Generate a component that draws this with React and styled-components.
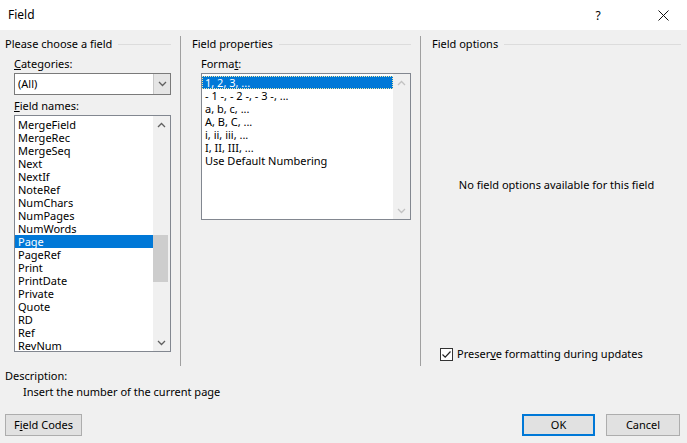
import React from 'react'
import styled, { createGlobalStyle } from 'styled-components'

const GlobalStyle = createGlobalStyle`
  html, body {
    margin: 0;
    padding: 0;
    background: #f0f0f0;
  }
  body {
    font-family: "Noto Sans", "DejaVu Sans", sans-serif;
    font-size: 11px;
    color: #000;
  }
  * { box-sizing: border-box; }
`

const fieldNames = [
  'MergeField', 'MergeRec', 'MergeSeq', 'Next', 'NextIf', 'NoteRef',
  'NumChars', 'NumPages', 'NumWords', 'Page', 'PageRef', 'Print',
  'PrintDate', 'Private', 'Quote', 'RD', 'Ref', 'RevNum'
]

const formats = [
  '1, 2, 3, ...', '- 1 -, - 2 -, - 3 -, ...', 'a, b, c, ...', 'A, B, C, ...',
  'i, ii, iii, ...', 'I, II, III, ...', 'Use Default Numbering'
]

const Chevron = ({ up, color = '#606060' }) => (
  <svg width="9" height="6" viewBox="0 0 9 6">
    <polyline
      points={up ? '1,5 4.5,1.5 8,5' : '1,1 4.5,4.5 8,1'}
      fill="none"
      stroke={color}
      strokeWidth="1.3"
    />
  </svg>
)

const App = () => {
  return (
    <Dialog>
      <GlobalStyle />
      <TitleBar>
        <span>Field</span>
        <TitleButtons>
          <TitleButton>?</TitleButton>
          <TitleButton>
            <svg width="11" height="11" viewBox="0 0 11 11">
              <path d="M0.5 0.5 L10.5 10.5 M10.5 0.5 L0.5 10.5" stroke="#111" strokeWidth="1" />
            </svg>
          </TitleButton>
        </TitleButtons>
      </TitleBar>

      <Body>
        <Columns>
          <Column width={181} padLeft={5} padRight={9} divider>
            <GroupHeading>
              <span>Please choose a field</span>
              <Rule />
            </GroupHeading>
            <Indent>
              <Label top={4}><u>C</u>ategories:</Label>
              <Combo>
                <ComboText>(All)</ComboText>
                <ComboButton><Chevron /></ComboButton>
              </Combo>
              <Label top={3}><u>F</u>ield names:</Label>
              <ListBox height={237}>
                <ListItems>
                  {fieldNames.map(n => (
                    <Item key={n} selected={n === 'Page'}>{n}</Item>
                  ))}
                </ListItems>
                <ScrollBar>
                  <Arrow><Chevron up /></Arrow>
                  <Track>
                    <Thumb style={{ top: 102, height: 47 }} />
                  </Track>
                  <Arrow><Chevron /></Arrow>
                </ScrollBar>
              </ListBox>
            </Indent>
          </Column>

          <Column width={240} padLeft={11} padRight={9} divider>
            <GroupHeading>
              <span>Field properties</span>
              <Rule />
            </GroupHeading>
            <Indent>
              <Label top={4}>Forma<u>t</u>:</Label>
              <ListBox height={147}>
                <ListItems>
                  {formats.map((f, i) => (
                    <Item key={f} selected={i === 0} focused={i === 0}>{f}</Item>
                  ))}
                </ListItems>
                <ScrollBar>
                  <Arrow><Chevron up color="#c2c2c2" /></Arrow>
                  <Track />
                  <Arrow><Chevron color="#c2c2c2" /></Arrow>
                </ScrollBar>
              </ListBox>
            </Indent>
          </Column>

          <Column grow padLeft={11} padRight={6}>
            <GroupHeading>
              <span>Field options</span>
              <Rule />
            </GroupHeading>
            <NoOptions>No field options available for this field</NoOptions>
            <CheckRow>
              <CheckBox>
                <svg width="11" height="11" viewBox="0 0 11 11">
                  <polyline points="1.5,5.5 4.2,8.2 9.5,2.5" fill="none" stroke="#222" strokeWidth="1.2" />
                </svg>
              </CheckBox>
              <span>Preser<u>v</u>e formatting during updates</span>
            </CheckRow>
          </Column>
        </Columns>

        <Description>
          <div>Description:</div>
          <DescText>Insert the number of the current page</DescText>
        </Description>

        <Footer>
          <Button width={77}>F<u>i</u>eld Codes</Button>
          <FooterRight>
            <Button width={73} primary>OK</Button>
            <Button width={74}>Cancel</Button>
          </FooterRight>
        </Footer>
      </Body>
    </Dialog>
  )
}

const Dialog = styled.div`
  width: 687px;
  height: 443px;
  display: flex;
  flex-direction: column;
  overflow: hidden;
  background: #f0f0f0;
`

const TitleBar = styled.div`
  height: 30px;
  flex: none;
  background: #fff;
  display: flex;
  align-items: center;
  justify-content: space-between;
  padding-left: 8px;
  font-size: 12px;
  line-height: 16px;
`

const TitleButtons = styled.div`
  display: flex;
  height: 100%;
`

const TitleButton = styled.div`
  width: 46px;
  height: 100%;
  display: flex;
  align-items: center;
  justify-content: center;
  font-size: 12px;
  padding-top: 1px;
  &:first-child { margin-right: 19px; }
  &:last-child { margin-right: 1px; }
`

const Body = styled.div`
  flex: 1;
  display: flex;
  flex-direction: column;
`

const Columns = styled.div`
  display: flex;
  margin-top: 6px;
  height: 330px;
`

const Column = styled.div`
  ${p => (p.grow ? 'flex: 1;' : `width: ${p.width}px; flex: none;`)}
  padding-left: ${p => p.padLeft}px;
  padding-right: ${p => p.padRight}px;
  padding-bottom: 5px;
  display: flex;
  flex-direction: column;
  border-right: ${p => (p.divider ? '1px solid #a0a0a0' : 'none')};
`

const GroupHeading = styled.div`
  display: flex;
  align-items: center;
  gap: 6px;
  height: 16px;
  line-height: 16px;
  white-space: nowrap;
`

const Rule = styled.div`
  flex: 1;
  height: 1px;
  background: #dcdcdc;
  margin-top: 1px;
`

const Indent = styled.div`
  padding-left: 9px;
  display: flex;
  flex-direction: column;
`

const Label = styled.div`
  margin-top: ${p => p.top}px;
  height: 17px;
  line-height: 16px;
`

const Combo = styled.div`
  height: 22px;
  border: 1px solid #7a7a7a;
  background: #fff;
  display: flex;
`

const ComboText = styled.div`
  flex: 1;
  padding-left: 3px;
  line-height: 20px;
`

const ComboButton = styled.div`
  width: 17px;
  background: #e5e5e5;
  border-left: 1px solid #c8c8c8;
  display: flex;
  align-items: center;
  justify-content: center;
`

const ListBox = styled.div`
  height: ${p => p.height}px;
  border: 1px solid #828790;
  background: #fff;
  display: flex;
`

const ListItems = styled.div`
  flex: 1;
  padding-top: 2px;
  overflow: hidden;
`

const Item = styled.div`
  height: 13px;
  line-height: 13px;
  padding-left: 3px;
  white-space: nowrap;
  background: ${p => (p.selected ? '#0078d7' : 'transparent')};
  color: ${p => (p.selected ? '#fff' : '#000')};
  outline: ${p => (p.focused ? '1px dotted #f3e9a6' : 'none')};
  outline-offset: -1px;
`

const ScrollBar = styled.div`
  width: 17px;
  flex: none;
  background: #f0f0f0;
  display: flex;
  flex-direction: column;
`

const Arrow = styled.div`
  height: 17px;
  flex: none;
  display: flex;
  align-items: center;
  justify-content: center;
`

const Track = styled.div`
  flex: 1;
  position: relative;
`

const Thumb = styled.div`
  position: absolute;
  left: 0;
  right: 2px;
  background: #cdcdcd;
`

const NoOptions = styled.div`
  margin-top: 125px;
  text-align: center;
  line-height: 16px;
`

const CheckRow = styled.div`
  margin-top: auto;
  margin-left: 8px;
  display: flex;
  align-items: center;
  gap: 4px;
  height: 14px;
  line-height: 14px;
`

const CheckBox = styled.div`
  width: 13px;
  height: 13px;
  border: 1px solid #333;
  background: #fff;
  display: flex;
  align-items: center;
  justify-content: center;
`

const Description = styled.div`
  padding-left: 5px;
  margin-top: 2px;
  line-height: 16px;
`

const DescText = styled.div`
  padding-left: 18px;
`

const Footer = styled.div`
  display: flex;
  justify-content: space-between;
  padding: 0 7px 0 5px;
  margin-top: 14px;
`

const FooterRight = styled.div`
  display: flex;
  gap: 11px;
`

const Button = styled.div`
  width: ${p => p.width}px;
  height: 22px;
  background: #e1e1e1;
  border: ${p => (p.primary ? '2px solid #0078d7' : '1px solid #adadad')};
  display: flex;
  align-items: center;
  justify-content: center;
  line-height: 16px;
`

export default App
